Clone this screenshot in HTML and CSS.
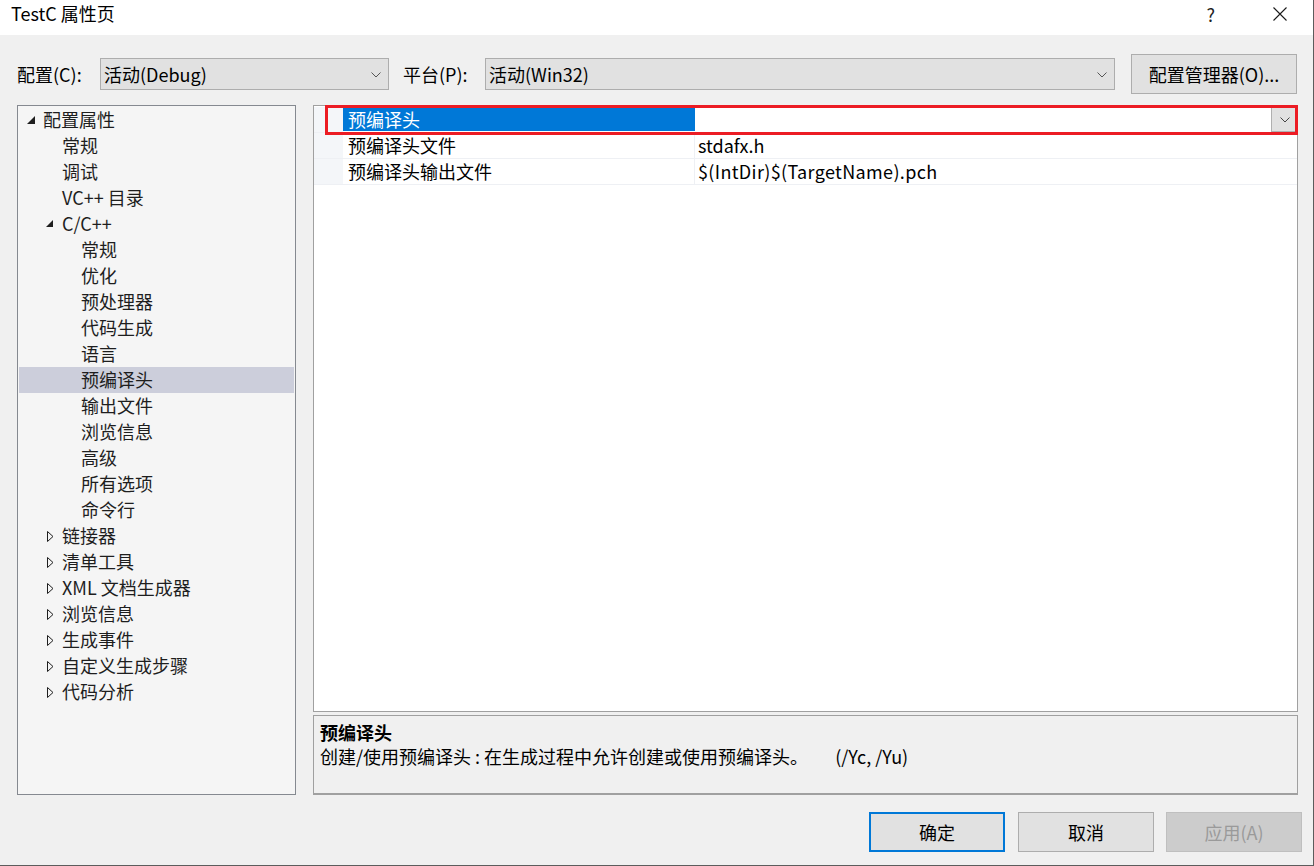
FILE: index.html
```html
<!DOCTYPE html>
<html lang="zh-CN">
<head>
<meta charset="utf-8">
<title>TestC 属性页</title>
<link rel="stylesheet" href="styles.css">
</head>
<body>
<div class="window">
  <div class="titlebar">
    <span class="title">TestC 属性页</span>
    <div class="tb-btns">
      <span class="help">?</span>
      <svg class="close" width="14" height="14" viewBox="0 0 14 14"><path d="M0.5 0.5 L13.5 13.5 M13.5 0.5 L0.5 13.5" stroke="#1a1a1a" stroke-width="1.1" fill="none"/></svg>
    </div>
  </div>
  <div class="body">
    <div class="toolbar">
      <span class="lbl lbl-config">配置(C):</span>
      <div class="combo combo-config"><span>活动(Debug)</span><svg class="chev" width="10" height="6" viewBox="0 0 10 6"><polyline points="0.5,0.5 5,5 9.5,0.5" stroke="#555" fill="none"/></svg></div>
      <span class="lbl lbl-platform">平台(P):</span>
      <div class="combo combo-platform"><span>活动(Win32)</span><svg class="chev" width="10" height="6" viewBox="0 0 10 6"><polyline points="0.5,0.5 5,5 9.5,0.5" stroke="#555" fill="none"/></svg></div>
      <button class="btn btn-mgr">配置管理器(O)...</button>
    </div>
    <div class="main">
      <div class="tree">
        <div class="ti l0"><span class="tw"><svg width="8" height="8" viewBox="0 0 8 8"><polygon points="8,0 8,8 0,8" fill="#1e1e1e"/></svg></span>配置属性</div>
        <div class="ti l1"><span class="tw"></span>常规</div>
        <div class="ti l1"><span class="tw"></span>调试</div>
        <div class="ti l1"><span class="tw"></span>VC++ 目录</div>
        <div class="ti l1"><span class="tw"><svg width="8" height="8" viewBox="0 0 8 8"><polygon points="7,0 7,7 0,7" fill="#1e1e1e"/></svg></span>C/C++</div>
        <div class="ti l2"><span class="tw"></span>常规</div>
        <div class="ti l2"><span class="tw"></span>优化</div>
        <div class="ti l2"><span class="tw"></span>预处理器</div>
        <div class="ti l2"><span class="tw"></span>代码生成</div>
        <div class="ti l2"><span class="tw"></span>语言</div>
        <div class="ti l2 sel"><span class="tw"></span>预编译头</div>
        <div class="ti l2"><span class="tw"></span>输出文件</div>
        <div class="ti l2"><span class="tw"></span>浏览信息</div>
        <div class="ti l2"><span class="tw"></span>高级</div>
        <div class="ti l2"><span class="tw"></span>所有选项</div>
        <div class="ti l2"><span class="tw"></span>命令行</div>
        <div class="ti l1"><span class="tw"><svg class="col" width="7" height="11" viewBox="0 0 7 11"><polygon points="0.5,0.5 6,5.5 0.5,10.5" stroke="#1e1e1e" fill="none"/></svg></span>链接器</div>
        <div class="ti l1"><span class="tw"><svg class="col" width="7" height="11" viewBox="0 0 7 11"><polygon points="0.5,0.5 6,5.5 0.5,10.5" stroke="#1e1e1e" fill="none"/></svg></span>清单工具</div>
        <div class="ti l1"><span class="tw"><svg class="col" width="7" height="11" viewBox="0 0 7 11"><polygon points="0.5,0.5 6,5.5 0.5,10.5" stroke="#1e1e1e" fill="none"/></svg></span>XML 文档生成器</div>
        <div class="ti l1"><span class="tw"><svg class="col" width="7" height="11" viewBox="0 0 7 11"><polygon points="0.5,0.5 6,5.5 0.5,10.5" stroke="#1e1e1e" fill="none"/></svg></span>浏览信息</div>
        <div class="ti l1"><span class="tw"><svg class="col" width="7" height="11" viewBox="0 0 7 11"><polygon points="0.5,0.5 6,5.5 0.5,10.5" stroke="#1e1e1e" fill="none"/></svg></span>生成事件</div>
        <div class="ti l1"><span class="tw"><svg class="col" width="7" height="11" viewBox="0 0 7 11"><polygon points="0.5,0.5 6,5.5 0.5,10.5" stroke="#1e1e1e" fill="none"/></svg></span>自定义生成步骤</div>
        <div class="ti l1"><span class="tw"><svg class="col" width="7" height="11" viewBox="0 0 7 11"><polygon points="0.5,0.5 6,5.5 0.5,10.5" stroke="#1e1e1e" fill="none"/></svg></span>代码分析</div>
      </div>
      <div class="right">
        <div class="grid">
          <div class="prow prow-sel">
            <div class="gut"></div>
            <div class="pname"><span class="sel-name">预编译头</span></div>
            <div class="pval">
              <span class="dd"><svg width="10" height="6" viewBox="0 0 10 6"><polyline points="0.5,0.5 5,5 9.5,0.5" stroke="#444" fill="none"/></svg></span>
            </div>
          </div>
          <div class="prow">
            <div class="gut"></div>
            <div class="pname">预编译头文件</div>
            <div class="pval">stdafx.h</div>
          </div>
          <div class="prow">
            <div class="gut"></div>
            <div class="pname">预编译头输出文件</div>
            <div class="pval latin">$(IntDir)$(TargetName).pch</div>
          </div>
          <div class="highlight"></div>
        </div>
        <div class="desc">
          <div class="desc-title">预编译头</div>
          <div class="desc-text">创建/使用预编译头 : 在生成过程中允许创建或使用预编译头。<span class="flags">(/Yc, /Yu)</span></div>
        </div>
      </div>
    </div>
    <div class="footer">
      <button class="btn btn-ok">确定</button>
      <button class="btn btn-cancel">取消</button>
      <button class="btn btn-apply">应用(A)</button>
    </div>
  </div>
</div>
</body>
</html>
```

FILE: styles.css
```css
* { box-sizing: border-box; }
html, body {
  margin: 0;
  padding: 0;
  width: 1314px;
  height: 866px;
  overflow: hidden;
  background: #f0f0f0;
}
body {
  font-family: "Noto Sans CJK SC", "Noto Sans", sans-serif;
  font-size: 18px;
  color: #1a1a1a;
}
.window {
  width: 1314px;
  height: 866px;
  border-right: 1px solid #5c5c5c;
  border-bottom: 1px solid #5c5c5c;
  display: flex;
  flex-direction: column;
  background: #f0f0f0;
}
.titlebar {
  height: 35px;
  background: #ffffff;
  display: flex;
  justify-content: space-between;
  align-items: flex-start;
  flex: none;
}
.title {
  margin-left: 11px;
  line-height: 26px;
  color: #000;
}
.tb-btns {
  display: flex;
  align-items: flex-start;
  margin-right: 26px;
}
.help {
  line-height: 28px;
  font-size: 18px;
  color: #222;
  margin-right: 58px;
}
.close {
  margin-top: 7px;
}
.body {
  flex: 1;
  display: flex;
  flex-direction: column;
}
.toolbar {
  margin-top: 19px;
  height: 40px;
  display: flex;
  align-items: center;
  padding-left: 17px;
}
.lbl {
  line-height: 24px;
  color: #000;
}
.lbl-config { width: 83px; }
.lbl-platform { width: 82px; margin-left: 14px; }
.combo {
  height: 32px;
  background: #e1e1e1;
  border: 1px solid #adadad;
  display: flex;
  align-items: center;
  justify-content: space-between;
  padding-left: 3px;
  padding-right: 7px;
  color: #000;
}
.combo span { line-height: 24px; }
.combo-config { width: 289px; }
.combo-platform { width: 630px; }
.chev { margin-top: 2px; }
.btn {
  font-family: inherit;
  font-size: 18px;
  color: #000;
  background: #e1e1e1;
  border: 1px solid #adadad;
  height: 40px;
  padding: 0;
  line-height: 24px;
}
.btn-mgr {
  width: 166px;
  margin-left: 16px;
}
.main {
  margin-top: 11px;
  height: 690px;
  display: flex;
  padding-left: 17px;
  gap: 17px;
}
.tree {
  width: 279px;
  height: 690px;
  background: #f5f5f5;
  border: 1px solid #858990;
  padding: 1px;
}
.ti {
  height: 26px;
  display: flex;
  align-items: center;
  line-height: 24px;
  padding-bottom: 2px;
  color: #1e1e1e;
  white-space: nowrap;
}
.tw {
  width: 16px;
  flex: none;
  display: flex;
  align-items: center;
  margin-top: 2px;
}
.l0 { padding-left: 8px; }
.l1 { padding-left: 27px; }
.l2 { padding-left: 46px; }
.col { margin-left: 1px; }
.ti.sel { background: #cccedb; }
.right {
  width: 985px;
  display: flex;
  flex-direction: column;
  gap: 3px;
}
.grid {
  position: relative;
  height: 608px;
  background: #ffffff;
  border: 1px solid #a0a0a0;
  padding-top: 1px;
}
.prow {
  display: flex;
  height: 26px;
  border-bottom: 1px solid #eef0f4;
}
.gut {
  width: 29px;
  background: #f4f6f9;
  flex: none;
}
.pname {
  width: 352px;
  flex: none;
  padding-left: 5px;
  line-height: 24px;
  border-right: 1px solid #eef0f4;
  color: #000;
}
.pval {
  flex: 1;
  padding-left: 3px;
  line-height: 24px;
  color: #000;
  display: flex;
}
.latin { letter-spacing: 0.35px; }
.prow-sel .pval { justify-content: flex-end; }
.prow-sel .pname {
  padding-left: 0;
  border-right: none;
}
.sel-name {
  display: block;
  height: 23px;
  margin-top: 1px;
  background: #0078d7;
  color: #ffffff;
  padding-left: 5px;
  line-height: 23px;
}
.dd {
  width: 26px;
  height: 25px;
  background: #e1e1e1;
  border: 1px solid #b0b0b0;
  border-right: none;
  display: flex;
  align-items: center;
  justify-content: center;
}
.highlight {
  position: absolute;
  left: 11px;
  top: -1px;
  width: 973px;
  height: 30px;
  border: 3px solid #ec1c24;
}
.desc {
  height: 80px;
  background: #f0f0f0;
  border: 1px solid #a0a0a0;
  border-bottom-width: 2px;
  padding: 4px 0 0 6px;
  color: #000;
}
.desc-title {
  font-weight: bold;
  line-height: 24px;
}
.desc-text {
  line-height: 24px;
}
.flags { margin-left: 27px; }
.footer {
  margin-top: 17px;
  display: flex;
  justify-content: flex-end;
  padding-right: 11px;
  gap: 13px;
}
.footer .btn { width: 136px; }
.btn-ok {
  border: 2px solid #0078d7;
}
.btn-apply {
  background: #cccccc;
  border-color: #bfbfbf;
  color: #9a9a9a;
}
.btn-cancel { margin-right: -1px; }
```
